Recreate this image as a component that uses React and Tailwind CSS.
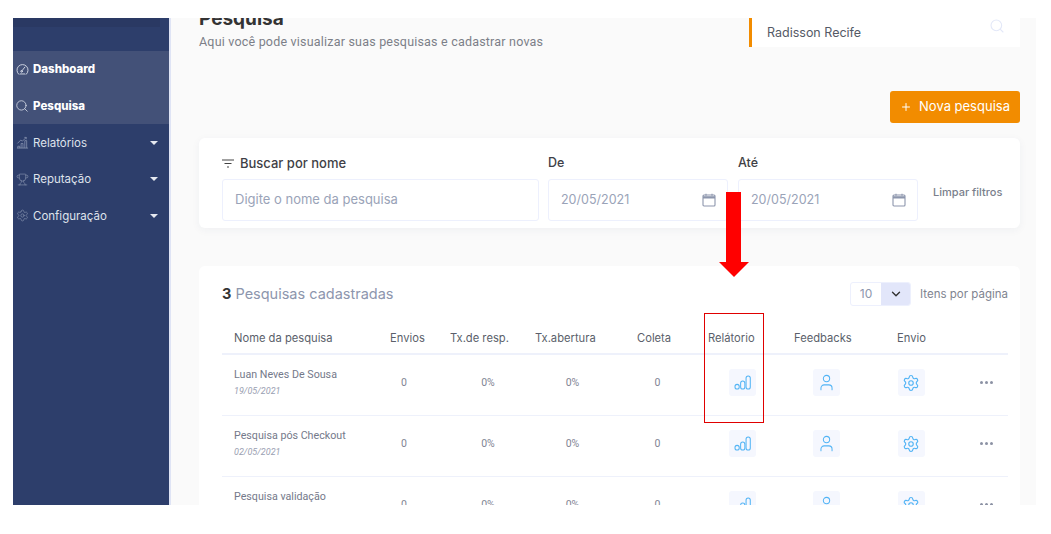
import React from "react";
import { Search, Trophy, Settings, Plus, ChevronDown, User } from "lucide-react";

const poppins = "font-['Inter','Noto_Sans',sans-serif]";

function ChartIcon({ className }) {
  return (
    <svg viewBox="0 0 18 16" fill="none" stroke="currentColor" strokeWidth="1.1" className={className}>
      <rect x="1" y="10" width="4.5" height="5" rx="2.2" />
      <rect x="7" y="6.5" width="4.5" height="8.5" rx="2.2" />
      <rect x="12.8" y="1" width="4.5" height="14" rx="2.2" />
    </svg>
  );
}

function GaugeIcon({ className }) {
  return (
    <svg viewBox="0 0 14 14" fill="none" stroke="currentColor" strokeWidth="1" strokeLinecap="round" className={className}>
      <path d="M3 12.2A6 6 0 1 1 11 12.2" />
      <path d="M6.2 8.6 9.6 4.4" />
      <circle cx="6" cy="9" r="0.9" />
      <path d="M4.5 11.8h5" />
    </svg>
  );
}

function SmallBars({ className }) {
  return (
    <svg viewBox="0 0 14 14" fill="none" stroke="currentColor" strokeWidth="0.8" className={className}>
      <path d="M1 13h12M2 13v-2h2v2M5.5 13V8h2v5M9.5 13V5h2v8" />
      <path d="M1.5 8 5 4.5l2 1 4-4M9 1.5h2v2" />
    </svg>
  );
}

function CalendarIcon() {
  return (
    <svg viewBox="0 0 14 14" className="w-[14px] h-[14px] text-[#8d96ad]" fill="none" stroke="currentColor" strokeWidth="1.1">
      <rect x="1" y="2" width="12" height="11" rx="1" />
      <path d="M1 3.2h12v2.3H1z" fill="currentColor" stroke="none" />
      <path d="M4 .8v2M10 .8v2" />
    </svg>
  );
}

function FilterIcon() {
  return (
    <svg viewBox="0 0 12 9" className="w-3 h-[9px] text-[#444]" fill="none" stroke="currentColor" strokeWidth="1">
      <path d="M0 1h12M2.5 4.5h7M5 8h2" />
    </svg>
  );
}

function NavItem({ icon, label, active, caret }) {
  return (
    <div className={`h-[36.67px] flex items-center pl-[2px] pr-[11px] ${active ? "bg-[#435178]" : ""}`}>
      <span className="w-[14px] h-[14px] text-[#d5dae6] flex items-center justify-center">{icon}</span>
      <span className={`ml-[4px] pt-[1px] text-[11.5px] text-[#dfe3ec] ${active ? "font-extrabold text-white" : ""}`}>{label}</span>
      {caret && <span className="ml-auto w-0 h-0 border-x-[4px] border-x-transparent border-t-[4px] border-t-[#e6e9f0]" />}
    </div>
  );
}

function ActionBtn({ children }) {
  return (
    <div className="w-[27px] h-[27px] rounded-[3px] bg-[#f5f7fe] text-[#52b4f5] flex items-center justify-center">
      {children}
    </div>
  );
}

const cellGrid = "grid grid-cols-[140px_84px_84px_85px_85px_84px_85px_84px_55px]";

function Row({ name, date }) {
  return (
    <div className={`${cellGrid} h-[61px] pb-[5px] items-center border-b border-[#eef1fb] font-['Roboto',sans-serif]`}>
      <div className="pl-3">
        <div className="text-[10.7px] leading-[14px] text-[#74798a] whitespace-nowrap">{name}</div>
        <div className="text-[9px] leading-[14px] mt-[2px] italic text-[#9aa0b2]">{date}</div>
      </div>
      <div className="text-center text-[10.5px] text-[#7f8494]">0</div>
      <div className="text-center text-[10.5px] text-[#7f8494]">0%</div>
      <div className="text-center text-[10.5px] text-[#7f8494]">0%</div>
      <div className="text-center text-[10.5px] text-[#7f8494]">0</div>
      <div className="flex justify-center"><ActionBtn><ChartIcon className="w-[17px] h-[15px]" /></ActionBtn></div>
      <div className="flex justify-center"><ActionBtn><User className="w-[19px] h-[19px]" strokeWidth={1.3} /></ActionBtn></div>
      <div className="flex justify-center"><ActionBtn><Settings className="w-[18px] h-[18px]" strokeWidth={1.5} /></ActionBtn></div>
      <div className="flex justify-center pl-[11px] gap-[2px]">
        <span className="w-[3px] h-[3px] rounded-full bg-[#8c92a4]" />
        <span className="w-[3px] h-[3px] rounded-full bg-[#8c92a4]" />
        <span className="w-[3px] h-[3px] rounded-full bg-[#8c92a4]" />
      </div>
    </div>
  );
}

function DateField({ label, widthClass }) {
  return (
    <div className={`${widthClass} shrink-0`}>
      <div className="text-[12.5px] leading-[16px] font-medium text-[#3f3f46]">{label}</div>
      <div className="mt-[8px] h-[42px] border border-[#edf0fd] rounded-[3px] flex items-center justify-between pl-[12px] pr-[11px]">
        <span className="text-[12.5px] text-[#9aa3b8]">20/05/2021</span>
        <CalendarIcon />
      </div>
    </div>
  );
}

export default function App() {
  return (
    <div className={`relative w-[1051px] h-[534px] bg-white overflow-hidden ${poppins}`}>
      <div className="ml-[13px] mt-[18px] w-[1023px] h-[487px] flex overflow-hidden bg-[#fafafa] absolute top-0 left-0">
        <aside className="w-[156px] bg-[#2d3e6b] shrink-0">
          <div className="h-[9px] w-[147px] bg-[#2a3963]" />
          <div className="h-[24px]" />
          <NavItem active label="Dashboard" icon={<GaugeIcon className="w-[13px] h-[13px]" />} />
          <NavItem active label="Pesquisa" icon={<Search className="w-[14px] h-[14px]" strokeWidth={1.4} />} />
          <NavItem caret label="Relatórios" icon={<SmallBars className="w-[13px] h-[13px] text-[#8e99b5]" />} />
          <NavItem caret label="Reputação" icon={<Trophy className="w-[13px] h-[13px] text-[#8e99b5]" strokeWidth={1.1} />} />
          <NavItem caret label="Configuração" icon={<Settings className="w-[13px] h-[13px] text-[#8e99b5]" strokeWidth={1.1} />} />
        </aside>
        <div className="w-[2px] bg-[#dfe4f5] shrink-0" />
        <main className="flex-1 pl-[28px] pr-[16px] min-w-0">
          <div className="h-[29px] flex justify-between">
            <div className="min-w-0">
              <div className="-mt-[11px] text-[19px] leading-[24px] font-bold text-[#333]">Pesquisa</div>
              <div className="mt-[3px] text-[12.5px] leading-[16px] text-[#7c7f88] font-['Roboto',sans-serif] tracking-[0.2px]">Aqui você pode visualizar suas pesquisas e cadastrar novas</div>
            </div>
            <div className="w-[271px] h-[29px] bg-white border-l-[3px] border-[#f28c00] pl-[15px] pr-[15px] flex justify-between">
              <span className="mt-[6.5px] text-[12.5px] leading-[16px] text-[#555a66]">Radisson Recife</span>
              <Search className="w-[16px] h-[16px] text-[#e3e8f8]" strokeWidth={1.6} />
            </div>
          </div>

          <div className="mt-[44px] flex justify-end">
            <button className="w-[130px] h-[32px] bg-[#f28c00] rounded-[3px] text-white text-[13px] flex items-center justify-center gap-[7px]">
              <Plus className="w-[12px] h-[12px]" strokeWidth={2} />
              Nova pesquisa
            </button>
          </div>

          <section className="mt-[15px] h-[90px] bg-white rounded-[6px] shadow-[0_2px_8px_rgba(40,50,90,0.05)] pl-[23px] pt-[17px] flex gap-[9px]">
            <div className="w-[317px] shrink-0">
              <div className="flex items-center gap-[6px] text-[13px] leading-[16px] font-medium text-[#3f3f46]">
                <FilterIcon />
                Buscar por nome
              </div>
              <div className="mt-[8px] h-[42px] border border-[#edf0fd] rounded-[3px] flex items-center pl-[12px] text-[13px] text-[#9aa3b8]">
                Digite o nome da pesquisa
              </div>
            </div>
            <DateField label="De" widthClass="w-[180px]" />
            <DateField label="Até" widthClass="w-[180px] ml-[1px]" />
            <div className="pl-[6px] pt-[30px] text-[11px] leading-[14px] font-medium text-[#7a7f8c] whitespace-nowrap">Limpar filtros</div>
          </section>

          <section className="mt-[38px] bg-white rounded-t-[6px] pl-[23px] pr-[12px] h-[300px]">
            <div className="flex items-center pt-[16px] h-[40px]">
              <div className="text-[14.5px] text-[#8d96ad]"><span className="font-bold text-[#333]">3</span> Pesquisas cadastradas</div>
              <div className="ml-auto flex items-center h-[24px] w-[61px] border border-[#edf0fd] rounded-[3px] overflow-hidden">
                <span className="flex-1 text-center text-[12px] text-[#8d96ad]">10</span>
                <span className="w-[29px] h-full bg-[#e2e6fa] flex items-center justify-center">
                  <ChevronDown className="w-[14px] h-[14px] text-[#333]" strokeWidth={2.4} />
                </span>
              </div>
              <span className="ml-[9px] pt-[1px] text-[11.5px] text-[#7f8490] whitespace-nowrap">Itens por página</span>
            </div>
            <div className="grid grid-cols-[168px_60px_85px_102px_71px_86px_103px_111px] h-[49px] items-center pt-[17px] border-b-2 border-[#eef1fb] text-[11.2px] text-[#5b5f6b] whitespace-nowrap">
              <div className="pl-3">Nome da pesquisa</div>
              <div>Envios</div>
              <div>Tx.de resp.</div>
              <div>Tx.abertura</div>
              <div>Coleta</div>
              <div>Relátorio</div>
              <div>Feedbacks</div>
              <div>Envio</div>
            </div>
            <Row name="Luan Neves De Sousa" date="19/05/2021" />
            <Row name="Pesquisa pós Checkout" date="02/05/2021" />
            <Row name="Pesquisa validação" date="01/05/2021" />
          </section>
        </main>
      </div>

      {/* Annotations laid over the screenshot */}
      <div className="absolute left-[704px] top-[313px] w-[60px] h-[110px] border border-[#e00000]" />
      <div className="absolute left-[726px] top-[192px] w-[15px] h-[70px] bg-[#ff0000]" />
      <div className="absolute left-[719px] top-[262px] w-0 h-0 border-x-[15px] border-x-transparent border-t-[15px] border-t-[#ff0000]" />
    </div>
  );
}
